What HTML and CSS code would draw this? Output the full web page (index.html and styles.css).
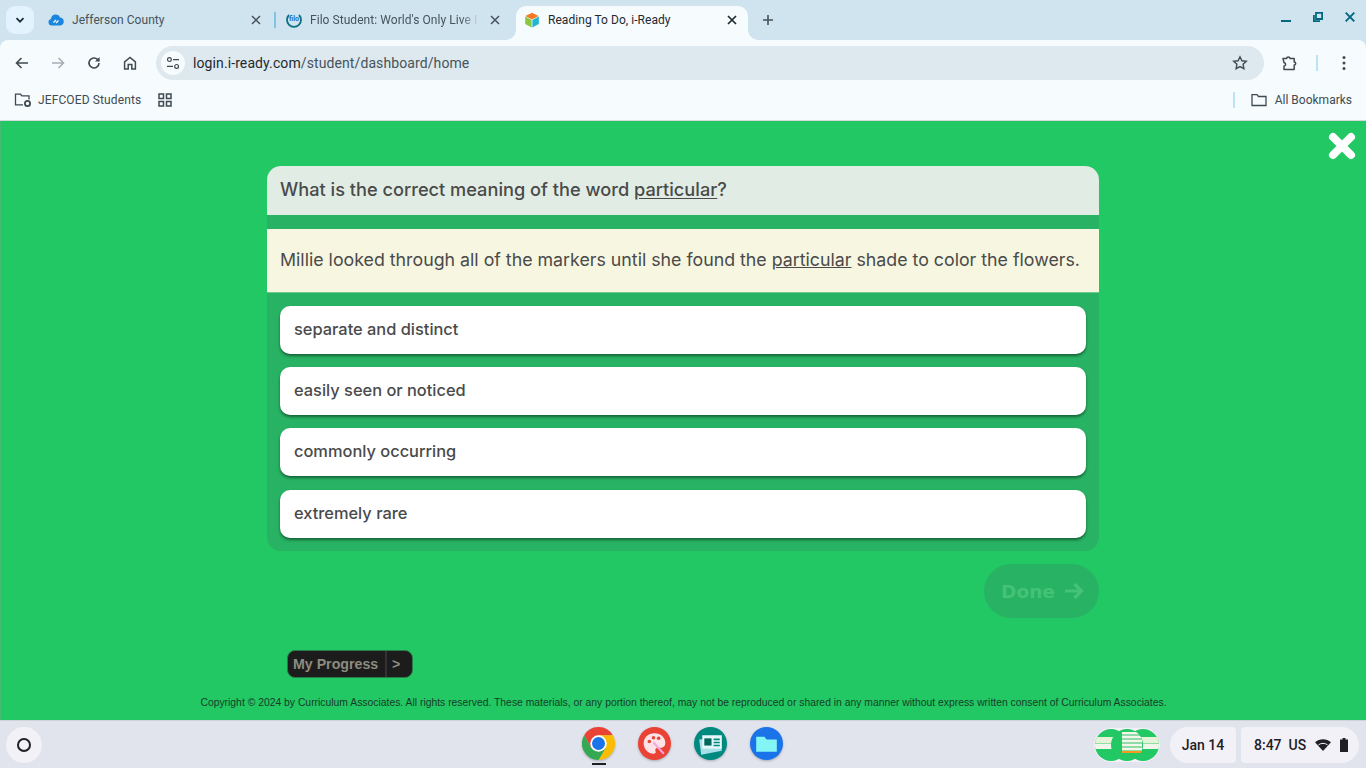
FILE: index.html
```html
<!DOCTYPE html>
<html lang="en">
<head>
<meta charset="utf-8">
<title>Reading To Do, i-Ready</title>
<link rel="stylesheet" href="styles.css">
</head>
<body>
<div class="screen">
  <header class="tabstrip">
    <button class="tabsearch"><svg width="12" height="12" viewBox="0 0 12 12"><path d="M2.5 4.2 6 7.7l3.5-3.5" fill="none" stroke="#1f2a30" stroke-width="1.7"/></svg></button>
    <div class="tab tab-one">
      <svg class="fav" width="16" height="16" viewBox="0 0 16 16"><path d="M3.6 13.500a3.300 3.300 0 0 1-.6-6.500A4.800 4.800 0 0 1 12.200 5.400 4.100 4.100 0 0 1 12.400 13.500z" fill="#1a86e0"/><path d="m5.500 10.500 2.500-2.500M8 11l2.500-2.500" stroke="#fff" stroke-width="1.200"/></svg>
      <span class="tab-title">Jefferson County</span>
      <svg class="tab-x" width="10" height="10" viewBox="0 0 10 10"><path d="m1 1 8 8M9 1 1 9" stroke="#46535b" stroke-width="1.5"/></svg>
    </div>
    <span class="tab-sep"></span>
    <div class="tab tab-two">
      <svg class="fav" width="16" height="16" viewBox="0 0 16 16"><path d="M3 3a7 7 0 1 0 10 0" fill="none" stroke="#0c6f86" stroke-width="1.800"/></svg>
      <span class="fav-word">filo</span>
      <span class="tab-title fade">Filo Student: World's Only Live I</span>
      <svg class="tab-x" width="10" height="10" viewBox="0 0 10 10"><path d="m1 1 8 8M9 1 1 9" stroke="#46535b" stroke-width="1.5"/></svg>
    </div>
    <div class="tab tab-active">
      <svg class="fav" width="16" height="16" viewBox="0 0 16 16"><path d="M8 0.800 14.600 4 8 7.600 1.400 4z" fill="#f47a25"/><path d="M1.200 4.400 7.600 8v7.400L1.200 12z" fill="#8cc63f"/><path d="M14.800 4.400 8.400 8v7.400l6.400-3.400z" fill="#1fb7d4"/></svg>
      <span class="tab-title dark">Reading To Do, i-Ready</span>
      <svg class="tab-x" width="10" height="10" viewBox="0 0 10 10"><path d="m1 1 8 8M9 1 1 9" stroke="#1f2a30" stroke-width="1.7"/></svg>
    </div>
    <svg class="newtab" width="12" height="12" viewBox="0 0 12 12"><path d="M6 1v10M1 6h10" stroke="#46535b" stroke-width="1.6"/></svg>
    <div class="winctl">
      <svg width="10" height="10" viewBox="0 0 10 10"><path d="M0 9h10" stroke="#03687f" stroke-width="2"/></svg>
      <svg width="10" height="10" viewBox="0 0 10 10"><path d="M3 .9h6.100V7H3z" fill="none" stroke="#03687f" stroke-width="1.800"/><path d="M.9 3v6.100H7" fill="none" stroke="#03687f" stroke-width="1.800"/></svg>
      <svg width="10" height="10" viewBox="0 0 10 10"><path d="m.7.7 8.600 8.600M9.300.7.700 9.300" stroke="#03687f" stroke-width="1.900"/></svg>
    </div>
  </header>

  <nav class="toolbar">
    <svg class="tb-icon" width="16" height="16" viewBox="0 0 16 16"><path d="M14 8H3M7.500 3 2.500 8l5 5" fill="none" stroke="#3f4a51" stroke-width="1.600"/></svg>
    <svg class="tb-icon" width="16" height="16" viewBox="0 0 16 16"><path d="M2 8h11M8.500 3l5 5-5 5" fill="none" stroke="#a5afb5" stroke-width="1.600"/></svg>
    <svg class="tb-icon" width="16" height="16" viewBox="0 0 16 16"><path d="M13 8a5 5 0 1 1-1.500-3.600L13 6" fill="none" stroke="#3f4a51" stroke-width="1.600"/><path d="M13.600 2v4.600H9z" fill="#3f4a51"/></svg>
    <svg class="tb-icon" width="16" height="16" viewBox="0 0 16 16"><path d="M2.600 14V6.800L8 2.400l5.400 4.400V14h-3.600V9.400H6.200V14z" fill="none" stroke="#3f4a51" stroke-width="1.500"/></svg>
    <div class="omnibox">
      <span class="site-chip"><svg width="14" height="14" viewBox="0 0 14 14"><circle cx="3.400" cy="3.600" r="1.900" fill="none" stroke="#3f4a51" stroke-width="1.200"/><path d="M7 3.600h6M1 10.400h6" stroke="#3f4a51" stroke-width="1.300"/><circle cx="10.600" cy="10.400" r="1.900" fill="none" stroke="#3f4a51" stroke-width="1.200"/></svg></span>
      <span class="url"><span class="host">login.i-ready.com</span>/student/dashboard/home</span>
      <svg class="star" width="16" height="16" viewBox="0 0 16 16"><path d="m8 1.800 1.900 4 4.400.5-3.200 3 .8 4.400L8 11.600l-3.900 2.100.8-4.400-3.200-3 4.400-.5z" fill="none" stroke="#3f4a51" stroke-width="1.400"/></svg>
    </div>
    <svg class="ext" width="16" height="16" viewBox="0 0 16 16"><path d="M1 3.500h3.700a1.600 1.600 0 0 1 3.200 0h4.300v3.600a1.500 1.500 0 0 1 0 3v4.400H2v-3.600a1.600 1.600 0 0 0 0-3.200z" fill="none" stroke="#3f4a51" stroke-width="1.500" stroke-linejoin="round"/></svg>
    <span class="bar-sep"></span>
    <svg class="dots" width="4" height="16" viewBox="0 0 4 16"><circle cx="2" cy="2.500" r="1.500" fill="#3f4a51"/><circle cx="2" cy="8" r="1.500" fill="#3f4a51"/><circle cx="2" cy="13.500" r="1.500" fill="#3f4a51"/></svg>
  </nav>

  <div class="bookmarks">
    <svg width="18" height="16" viewBox="0 0 18 16"><path d="M9 12.800H1.500V2.200h5l1.500 1.700h7v3.500" fill="none" stroke="#3f4a51" stroke-width="1.300"/><circle cx="13.500" cy="11.500" r="2.600" fill="none" stroke="#3f4a51" stroke-width="1.800"/></svg>
    <span class="bm-label">JEFCOED Students</span>
    <svg class="apps" width="14" height="14" viewBox="0 0 14 14"><path d="M1 1h4.500v4.500H1zM8.500 1H13v4.500H8.500zM1 8.500h4.500V13H1zM8.500 8.500H13V13H8.500z" fill="none" stroke="#3f4a51" stroke-width="1.500"/></svg>
    <span class="bm-sep"></span>
    <svg class="bm-folder" width="16" height="14" viewBox="0 0 16 14"><path d="M1 12.500V1.700h5l1.500 1.800H15v9z" fill="none" stroke="#3f4a51" stroke-width="1.300"/></svg>
    <span class="bm-all">All Bookmarks</span>
  </div>

  <main class="lesson">
    <svg class="close-x" width="28" height="28" viewBox="0 0 28 28"><path d="M5 5 23 23M23 5 5 23" stroke="#fff" stroke-width="8" stroke-linecap="round"/></svg>
    <section class="card">
      <h1 class="question">What is the correct meaning of the word <u>particular</u>?</h1>
      <p class="sentence">Millie looked through all of the markers until she found the <u>particular</u> shade to color the flowers.</p>
      <ul class="options">
        <li class="option">separate and distinct</li>
        <li class="option">easily seen or noticed</li>
        <li class="option">commonly occurring</li>
        <li class="option">extremely rare</li>
      </ul>
    </section>
    <div class="done-row">
      <button class="done">Done <svg width="20" height="18" viewBox="0 0 20 18"><path d="M1 9h16M10.500 2l7 7-7 7" fill="none" stroke="currentColor" stroke-width="3.200"/></svg></button>
    </div>
    <div class="progress-row">
      <div class="progress"><span class="progress-label">My Progress</span><span class="progress-arrow">&gt;</span></div>
    </div>
    <p class="copyright">Copyright © 2024 by Curriculum Associates. All rights reserved. These materials, or any portion thereof, may not be reproduced or shared in any manner without express written consent of Curriculum Associates.</p>
  </main>

  <footer class="shelf">
    <span class="launcher"><span class="ring"></span></span>
    <div class="apps-row">
      <span class="app-wrap">
        <svg class="app" width="33" height="33" viewBox="0 0 32 32"><path d="M2.140 8A16 16 0 0 1 29.860 8H16L9 20z" fill="#ea4335"/><path d="M29.860 8A16 16 0 0 1 16 32l7-12-7-12z" fill="#fbbc04"/><path d="M16 32A16 16 0 0 1 2.140 8L9 20h14z" fill="#34a853"/><circle cx="16" cy="16" r="8" fill="#fff"/><circle cx="16" cy="16" r="6.300" fill="#1a73e8"/></svg>
        <span class="running"></span>
      </span>
      <svg class="app" width="33" height="33" viewBox="0 0 32 32"><circle cx="16" cy="16" r="16" fill="#ea4335"/><path d="M16 6C9.500 6 5.500 10.500 5.500 16S10 26 15 26c2 0 2.500-1.200 2-2.500-.8-2 .3-3.500 2.500-3.500h3c2.500 0 4-1.800 4-4.500C26.500 10 22 6 16 6z" fill="#fbe3e8"/><circle cx="11" cy="14" r="1.700" fill="#ea4335"/><circle cx="15" cy="10.500" r="1.700" fill="#ea4335"/><circle cx="20" cy="11" r="1.700" fill="#ea4335"/><path d="m15 15 10 11" stroke="#f6a6d8" stroke-width="2"/></svg>
      <svg class="app" width="33" height="33" viewBox="0 0 32 32"><circle cx="16" cy="16" r="16" fill="#00897f"/><path d="m5 12 20-1 2 12-20 4z" fill="#a8e0ea"/><path d="M8 8h19v13H8z" fill="#e6f7fa"/><path d="M10 11h7v7h-7z" fill="#00695f"/><path d="M19 12h6M19 15h6M19 18h6" stroke="#00897f" stroke-width="1.500"/></svg>
      <svg class="app" width="33" height="33" viewBox="0 0 32 32"><circle cx="16" cy="16" r="16" fill="#1a73e8"/><path d="M6 9.500h8l2 2.500h10v12H6z" fill="#84f5f5"/></svg>
    </div>
    <div class="tray">
      <div class="thumbs">
        <span class="thumb thumb-a"><span class="thumb-strip"></span></span>
        <span class="thumb thumb-c"><span class="thumb-strip"></span></span>
        <span class="thumb thumb-b"><span class="thumb-lines"></span><span class="thumb-orange"></span></span>
      </div>
      <span class="pill pill-date">Jan 14</span>
      <div class="pill pill-status">
        <span class="time">8:47</span><span class="ime">US</span>
        <svg class="wifi" width="16" height="13" viewBox="0 0 16 13"><path d="M0 4.300C4.500.200 11.500.200 16 4.300L8 13z" fill="#1f2024"/><path d="M3.500 6.800c2.600-1.900 6.400-1.900 9 0" stroke="#f1f1f7" stroke-width="1" fill="none"/></svg>
        <svg class="batt" width="8" height="14" viewBox="0 0 8 14"><path d="M2.500 0h3v1.500H8V14H0V1.500h2.500z" fill="#1f2024"/></svg>
      </div>
    </div>
  </footer>
</div>
</body>
</html>
```
FILE: styles.css
```css
* { box-sizing: border-box; }
html, body { margin: 0; padding: 0; }
body { width: 1366px; height: 768px; overflow: hidden; font-family: Roboto, sans-serif; }
.screen { display: flex; flex-direction: column; width: 1366px; height: 768px; background: #cfe4ef; }

/* tab strip */
.tabstrip { display: flex; align-items: flex-start; height: 40px; padding-top: 6px; flex: none; }
.tabsearch { width: 28px; height: 28px; margin-left: 6px; border: 0; padding: 0; border-radius: 9px; background: #e2f3fd; display: flex; align-items: center; justify-content: center; flex: none; }
.tab { display: flex; align-items: center; height: 28px; flex: none; font-size: 12px; letter-spacing: .05px; color: #46535b; position: relative; }
.tab-one { width: 227px; padding-left: 14px; }
.tab-one .tab-title { width: 179px; }
.tab-x { flex: none; }
.fav { flex: none; margin-right: 8px; }
.tab-title { white-space: nowrap; }
.tab-sep { width: 2px; height: 16px; margin: 6px 0 0 13px; background: #7fc4e6; flex: none; }
.tab-two { width: 228px; padding-left: 10px; }
.tab-two .fav { margin-right: 8px; }
.fav-word { position: absolute; left: 13px; top: 9px; font-size: 7px; font-weight: 700; letter-spacing: 0; color: #1a6fd0; line-height: 9px; }
.tab-two .tab-title { width: 180px; }
.fade { -webkit-mask-image: linear-gradient(90deg, #000 84%, transparent 94%); mask-image: linear-gradient(90deg, #000 84%, transparent 94%); }
.tab-active { width: 232px; height: 34px; padding: 0 11px 6px 8px; background: #f6fbfe; border-radius: 10px 10px 0 0; margin-left: 12px; }
.tab-active::before, .tab-active::after { content: ""; position: absolute; bottom: 0; width: 10px; height: 10px; }
.tab-active::before { left: -10px; background: radial-gradient(circle at 0 0, transparent 9.500px, #f6fbfe 10px); }
.tab-active::after { right: -10px; background: radial-gradient(circle at 100% 0, transparent 9.500px, #f6fbfe 10px); }
.tab-active .fav { margin-right: 8px; }
.tab-active .tab-title { width: 179px; }
.dark { color: #1f2a30; }
.newtab { margin: 8px 0 0 14px; flex: none; }
.winctl { margin-left: auto; display: flex; gap: 22px; padding: 6px 11px 0 0; }

/* toolbar */
.toolbar { display: flex; align-items: center; height: 41px; background: #f6fbfe; border-radius: 8px 8px 0 0; padding: 5px 0 1px 14px; flex: none; }
.tb-icon { flex: none; margin-right: 20px; }
.omnibox { display: flex; align-items: center; width: 1108px; height: 34px; margin-left: -2px; background: #dde9ee; border-radius: 17px; padding: 0 16px 0 5px; flex: none; }
.site-chip { width: 24px; height: 24px; border-radius: 50%; background: #f6fbfe; display: flex; align-items: center; justify-content: center; flex: none; }
.url { margin-left: 8px; font-size: 14px; letter-spacing: .1px; color: #46535b; flex: 1; white-space: nowrap; }
.host { color: #1f2a30; }
.star { flex: none; }
.ext { flex: none; margin-left: 18px; }
.bar-sep { width: 2px; height: 16px; margin-left: 18px; background: #bde3f6; flex: none; }
.dots { flex: none; margin-left: 24px; }

/* bookmarks */
.bookmarks { display: flex; align-items: center; height: 40px; background: #f6fbfe; padding: 0 14px 2px; font-size: 12px; letter-spacing: .12px; color: #3f4a51; flex: none; border-bottom: 1px solid #d5d9dc; }
.bm-label { margin-left: 6px; }
.apps { margin-left: 17px; }
.bm-sep { width: 2px; height: 16px; margin-left: auto; background: #bde3f6; transform: translateX(-1px); }
.bm-folder { margin-left: 15px; }
.bm-all { margin-left: 8px; letter-spacing: 0; }

/* lesson */
.lesson { position: relative; flex: none; height: 599px; background: #21c864; border-left: 1px solid #45bb74; padding: 45px 0 0 266px; display: flex; flex-direction: column; }
.close-x { position: absolute; left: 1327px; top: 11px; }
.card { width: 832px; height: 385px; background: #28b364; border-radius: 14px; overflow: hidden; flex: none; }
.question { margin: 0; height: 49px; padding: 0 13px; background: #e1ede4; color: #4a4a4a; font: 450 18.200px/47px Inter, sans-serif; white-space: nowrap; }
.question u { text-underline-offset: 2px; }
.sentence { margin: 14px 0 0; height: 64px; padding: 0 13px; background: #f7f6e1; border-bottom: 1px solid #6fcb8b; color: #4a4a4a; font: 400 17.770px/61px Inter, sans-serif; white-space: nowrap; }
.options { list-style: none; margin: 13px 0 0; padding: 0 13px; display: flex; flex-direction: column; gap: 13.200px; }
.option { height: 48px; padding-left: 14px; background: #fff; border-radius: 10px; color: #4a4a4a; font: 450 16.400px/47px Inter, sans-serif; box-shadow: 0 2px 3px rgba(0, 0, 0, .45); }
.done-row { display: flex; justify-content: flex-end; width: 832px; margin-top: 13px; flex: none; }
.done { display: flex; align-items: center; justify-content: center; gap: 9px; width: 115px; height: 54px; border: 0; padding: 0 0 0 2px; border-radius: 27px; background: #28b364; color: #44c277; font: 700 18.500px "DejaVu Sans", sans-serif; }
.progress-row { margin: 32px 0 0 20px; flex: none; }
.progress { display: inline-flex; align-items: stretch; width: 126px; height: 28px; background: #1c1c1c; border: 1px solid #2a7a4a; border-radius: 8px; color: #8c8c80; font: 700 14.200px/26px "Liberation Sans", sans-serif; }
.progress-label { width: 99px; padding-left: 5px; border-right: 2px solid #333; white-space: nowrap; }
.progress-arrow { padding-left: 5px; }
.copyright { position: absolute; left: 0; right: 0; top: 576px; margin: 0; text-align: center; font: 400 10.360px/12px "Liberation Sans", sans-serif; color: #173d27; white-space: nowrap; }

/* shelf */
.shelf { position: relative; flex: none; height: 48px; background: #e1e3ed; border-top: 1px solid #cfd2d8; display: flex; align-items: center; }
.launcher { width: 36px; height: 36px; margin-left: 6px; border-radius: 50%; background: #f1f1f7; display: flex; align-items: center; justify-content: center; }
.ring { width: 14px; height: 14px; border-radius: 50%; border: 2px solid #1f2024; }
.apps-row { position: absolute; left: 582px; top: 6px; display: flex; gap: 23px; }
.app-wrap { position: relative; display: block; width: 33px; height: 33px; }
.app { display: block; filter: drop-shadow(0 1px 1px rgba(0, 0, 0, .25)); }
.running { position: absolute; left: 10px; top: 36px; width: 14px; height: 2px; background: #1f2024; }
.tray { margin-left: auto; display: flex; align-items: center; padding-right: 7px; }
.thumbs { position: relative; width: 66px; height: 34px; margin-right: 10px; border-radius: 17px; background: #f1f1f7; }
.thumb { position: absolute; top: 1px; width: 32px; height: 32px; border-radius: 50%; background: #21c864; overflow: hidden; }
.thumb-a { left: 1px; }
.thumb-c { right: 1px; }
.thumb-b { left: 17px; }
.thumb-strip { position: absolute; left: 0; right: 0; top: 8px; height: 12px; background: linear-gradient(#e4f2d8 0 6px, #8ee0a8 6px 7px, #f0f7ea 7px 12px); }
.thumb-lines { position: absolute; left: 11px; right: 1px; top: 3px; height: 19px; background: repeating-linear-gradient(#f2f7ea 0 2px, #8fdcaa 2px 4px); }
.thumb-orange { position: absolute; left: 11px; right: 1px; top: 22px; height: 2px; background: #f59a1a; }
.pill { display: flex; align-items: center; height: 36px; background: #f1f1f7; font-size: 14px; font-weight: 500; color: #1f2024; }
.pill-date { width: 66px; justify-content: center; border-radius: 18px 4px 4px 18px; margin-right: 5px; }
.pill-status { width: 118px; padding-left: 13px; border-radius: 4px 18px 18px 4px; }
.ime { margin-left: 7px; }
.wifi { margin-left: 9px; }
.batt { margin-left: 9px; }
```
